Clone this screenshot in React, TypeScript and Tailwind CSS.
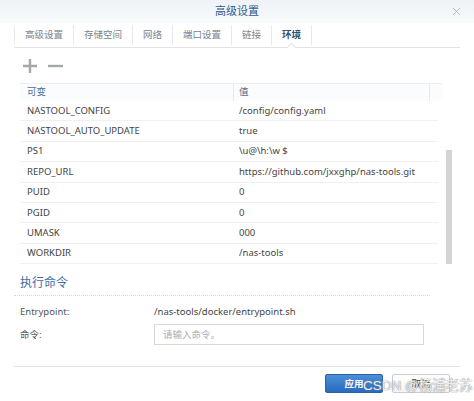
import { X } from "lucide-react";

const rows: [string, string][] = [
  ["NASTOOL_CONFIG", "/config/config.yaml"],
  ["NASTOOL_AUTO_UPDATE", "true"],
  ["PS1", "\\u@\\h:\\w $"],
  ["REPO_URL", "https://github.com/jxxghp/nas-tools.git"],
  ["PUID", "0"],
  ["PGID", "0"],
  ["UMASK", "000"],
  ["WORKDIR", "/nas-tools"],
];

const tabs = ["高级设置", "存储空间", "网络", "端口设置", "链接", "环境"];

export default function App() {
  return (
    <div className="relative w-[474px] h-[401px] overflow-hidden bg-white text-[9.5px] text-[#444] font-['Noto_Sans','Noto_Sans_CJK_SC',sans-serif]">
      {/* title bar */}
      <div className="relative h-[23px] bg-gradient-to-b from-[#eef2f6] to-[#f9fbfc] flex items-center justify-center">
        <span className="text-[11px] text-[#2d5d91]">高级设置</span>
        <X className="absolute right-[11px] top-[5px] w-[13px] h-[13px] text-[#9aa3ad]" strokeWidth={1.3} />
      </div>

      {/* tabs */}
      <div className="mx-[14px] h-[25px] border-b border-[#dfe3e8] flex items-stretch">
        <div className="w-px bg-[#e6e9ed] my-[3px]" />
        {tabs.map((t, i) => (
          <div key={t} className="relative flex items-center">
            <span
              className={
                i === 5
                  ? "px-[10px] text-[#2d4f73] font-semibold"
                  : "px-[10px] text-[#7a848e]"
              }
            >
              {t}
            </span>
            <div className="w-px h-[20px] bg-[#e6e9ed]" />
            {i === 5 && (
              <div className="absolute left-[16px] bottom-[-4px] w-[7px] h-[7px] bg-white border-l border-t border-[#dfe3e8] rotate-45" />
            )}
          </div>
        ))}
      </div>

      {/* toolbar */}
      <div className="h-[35px] flex items-center gap-[10px] pl-[22px]">
        <svg width="16" height="16" viewBox="0 0 16 16">
          <path d="M8 1v14M1 8h14" stroke="#a2a8ae" strokeWidth="2.4" />
        </svg>
        <svg width="15" height="16" viewBox="0 0 15 16">
          <path d="M0 8h15" stroke="#a2a8ae" strokeWidth="2.4" />
        </svg>
      </div>

      {/* table */}
      <div className="relative ml-[20px] mr-[22px]">
        <div className="flex h-[18px] items-center border-t border-[#eceef1] bg-[#fbfcfd] mr-[10px]">
          <div className="w-[213px] pl-[7px] text-[#4b6d8f]">可变</div>
          <div className="flex-1 h-full border-l border-r border-[#e6e9ed] pl-[5px] flex items-center text-[#4b6d8f]">值</div>
          <div className="w-[12px]" />
        </div>
        <div className="mr-[14px]">
          {rows.map(([k, v]) => (
            <div key={k} className="flex h-[20.4px] items-center border-b border-[#eef0f2]">
              <div className="w-[213px] pl-[7px]">{k}</div>
              <div className="flex-1 pl-[6px]">{v}</div>
            </div>
          ))}
        </div>
        <div className="absolute right-[0px] top-[67px] w-[6px] h-[114px] bg-[#d4d4d4]" />
      </div>

      {/* exec command */}
      <div className="mx-[14px] mt-[10px]">
        <div className="pl-[6px] mr-[30px] pb-[3px] text-[12px] text-[#3b6ea3] border-b border-dotted border-[#d5d9de]">
          执行命令
        </div>
        <div className="pl-[6px] mt-[8px] flex items-center h-[16px]">
          <div className="w-[134px] text-[#555]">Entrypoint:</div>
          <div className="text-[#444]">/nas-tools/docker/entrypoint.sh</div>
        </div>
        <div className="pl-[6px] mt-[4px] flex items-center">
          <div className="w-[134px] text-[#555]">命令:</div>
          <div className="w-[270px] h-[21px] border border-[#d5d9de] flex items-center pl-[8px] text-[#aab0b6]">
            请输入命令。
          </div>
        </div>
      </div>

      {/* footer */}
      <div className="mx-[14px] mt-[21px] border-t border-[#e1e4e8] flex justify-end gap-[9px] pt-[7px] pr-[10px]">
        <div className="w-[58px] h-[19px] rounded-[2px] bg-gradient-to-b from-[#4a8fd8] to-[#2a6bbd] border border-[#2a62a8] flex items-center justify-center text-white font-semibold">
          应用
        </div>
        <div className="w-[58px] h-[19px] rounded-[2px] bg-gradient-to-b from-white to-[#f1f3f5] border border-[#c8cdd3] flex items-center justify-center text-[#444]">
          取消
        </div>
      </div>

      {/* watermark */}
      <div className="absolute left-[363px] top-[376px] whitespace-nowrap text-[13.5px] text-white/85 [text-shadow:0_0_1px_#888,0_0_1px_#888] font-['Liberation_Sans','Noto_Sans_CJK_SC',sans-serif]">
        CSDN @杨浦老苏
      </div>
    </div>
  );
}
